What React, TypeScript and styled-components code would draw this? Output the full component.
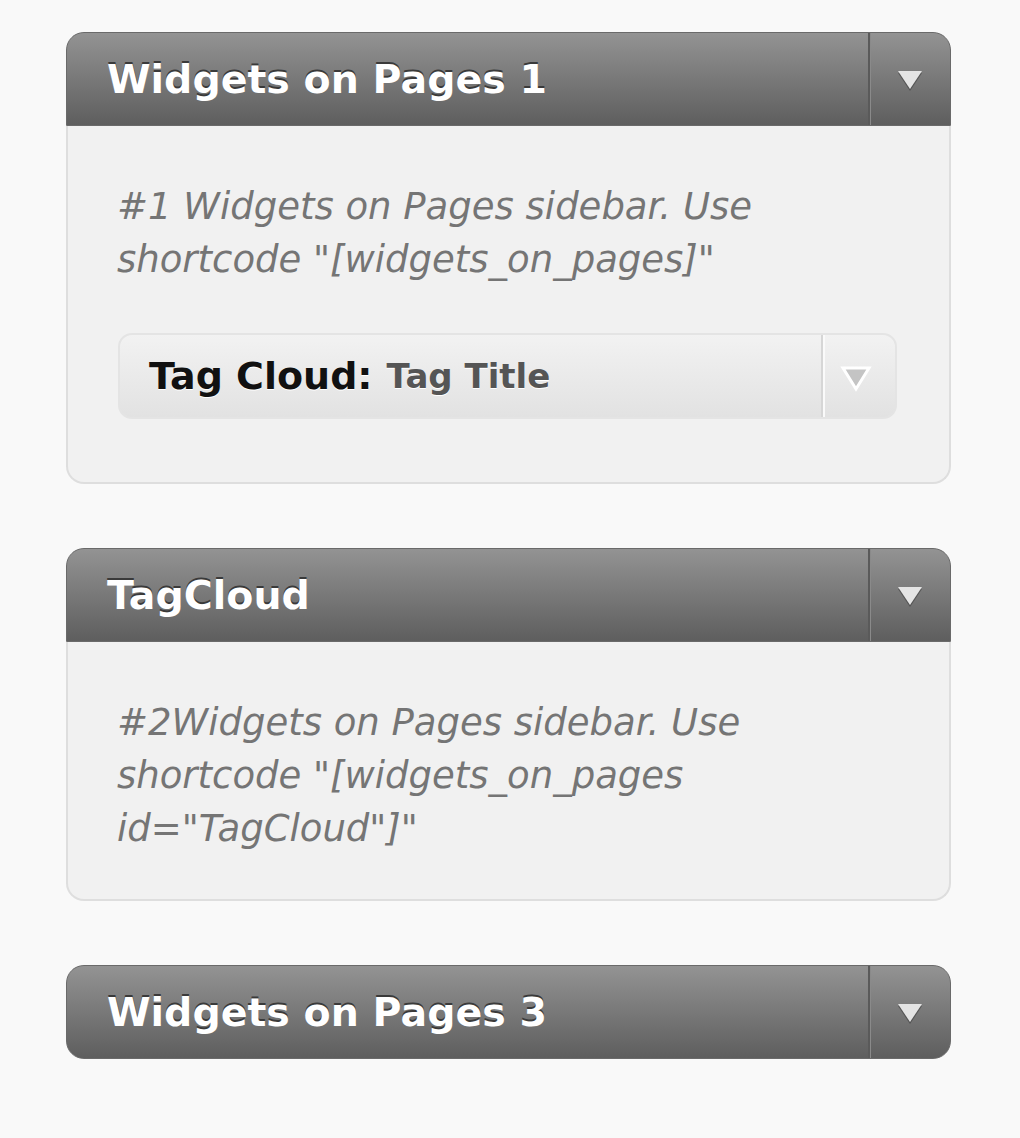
import React from "react";
import styled, { createGlobalStyle } from "styled-components";

const Global = createGlobalStyle`
  html, body { margin: 0; padding: 0; background: #f9f9f9; }
  body { font-family: "DejaVu Sans", Verdana, sans-serif; }
`;

const Page = styled.div`
  width: 885px;
  padding: 32px 0 0 66px;
  display: flex;
  flex-direction: column;
  gap: 64px;
`;

const Panel = styled.section`
  display: flex;
  flex-direction: column;
`;

const Header = styled.div<{ $open: boolean }>`
  height: 94px;
  box-sizing: border-box;
  display: flex;
  align-items: stretch;
  background: linear-gradient(#939393, #5e5e5e);
  border: 1px solid #6a6a6a;
  border-radius: ${(p) => (p.$open ? "18px 18px 0 0" : "18px")};
  overflow: hidden;
`;

const Title = styled.h3`
  flex: 1;
  margin: 0;
  padding-left: 40px;
  display: flex;
  align-items: center;
  font-family: "DejaVu Sans", Verdana, sans-serif;
  font-weight: bold;
  font-size: 39.5px;
  color: #fff;
  text-shadow: 0 -2px 0 #3a3a3a;
  white-space: nowrap;
`;

const Toggle = styled.div`
  width: 82px;
  border-left: 2px solid #5a5a5a;
  box-shadow: inset 1px 0 0 #8a8a8a;
  display: flex;
  align-items: center;
  justify-content: center;
  padding-top: 4px;
  box-sizing: border-box;
`;

const Body = styled.div`
  background: #f1f1f1;
  border: 2px solid #dedede;
  border-top: none;
  border-radius: 0 0 18px 18px;
  padding: 54px 52px 44px 50px;
  display: flex;
  flex-direction: column;
`;

const Description = styled.p`
  margin: 0 0 0 -1px;
  font-family: "DejaVu Sans", Verdana, sans-serif;
  font-style: italic;
  font-size: 37px;
  line-height: 53px;
  color: #757575;
`;

const Select = styled.div`
  height: 86px;
  box-sizing: border-box;
  margin: 47px 0 19px;
  display: flex;
  align-items: stretch;
  background: linear-gradient(#f2f2f2, #e2e2e2);
  border: 2px solid #e4e4e4;
  border-radius: 14px;
  overflow: hidden;
`;

const SelectLabel = styled.div`
  flex: 1;
  display: flex;
  align-items: center;
  padding-left: 29px;
  white-space: nowrap;
`;

const Strong = styled.span`
  font-family: "DejaVu Sans", Verdana, sans-serif;
  font-weight: bold;
  font-size: 38px;
  color: #111;
  text-shadow: 0 1px 0 #fff;
`;

const Sub = styled.span`
  font-family: "DejaVu Sans", Verdana, sans-serif;
  font-weight: bold;
  font-size: 34px;
  color: #555;
  margin-left: 14px;
  text-shadow: 0 1px 0 #fff;
`;

const SelectToggle = styled.div`
  width: 74px;
  border-left: 2px solid #d6d6d6;
  box-shadow: inset 2px 0 0 #fafafa;
  display: flex;
  align-items: center;
  justify-content: center;
  padding: 6px 6px 0 0;
  box-sizing: border-box;
`;

const HeaderArrow = () => (
  <svg width="28" height="24" viewBox="0 0 28 24">
    <path d="M2 4 L26 4 L14 22 Z" fill="#3f3f3f" opacity="0.6" />
    <path d="M2 2 L26 2 L14 20 Z" fill="#e4e4e4" />
  </svg>
);

const SelectArrow = () => (
  <svg width="32" height="28" viewBox="0 0 32 28">
    <path d="M3 3 L29 3 L16 24 Z" fill="#c4c4c4" stroke="#fff" strokeWidth="3" strokeLinejoin="miter" />
  </svg>
);

const Widget = ({
  title,
  open,
  desc,
  children,
}: {
  title: string;
  open: boolean;
  desc?: string;
  children?: React.ReactNode;
}) => (
  <Panel>
    <Header $open={open}>
      <Title>{title}</Title>
      <Toggle>
        <HeaderArrow />
      </Toggle>
    </Header>
    {open && (
      <Body>
        <Description>{desc}</Description>
        {children}
      </Body>
    )}
  </Panel>
);

export default function App() {
  return (
    <>
      <Global />
      <Page>
        <Widget
          title="Widgets on Pages 1"
          open
          desc={'#1 Widgets on Pages sidebar. Use shortcode "[widgets_on_pages]"'}
        >
          <Select>
            <SelectLabel>
              <Strong>Tag Cloud:</Strong>
              <Sub>Tag Title</Sub>
            </SelectLabel>
            <SelectToggle>
              <SelectArrow />
            </SelectToggle>
          </Select>
        </Widget>
        <Widget
          title="TagCloud"
          open
          desc={'#2Widgets on Pages sidebar. Use shortcode "[widgets_on_pages id="TagCloud"]"'}
        />
        <Widget title="Widgets on Pages 3" open={false} />
      </Page>
    </>
  );
}
